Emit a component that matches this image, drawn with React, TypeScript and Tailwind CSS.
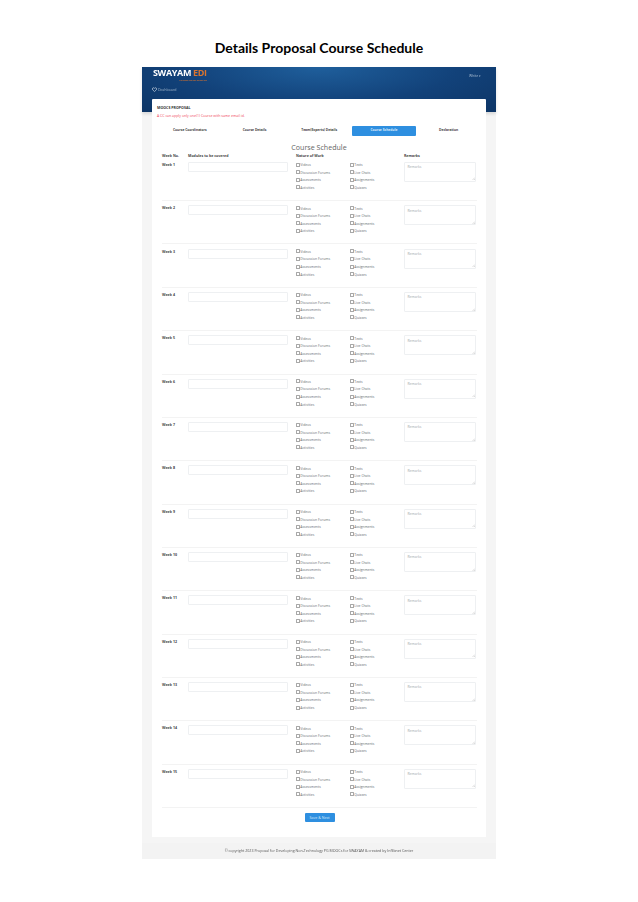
const tabs = ["Course Coordinators", "Course Details", "Team(Experts) Details", "Course Schedule", "Declaration"];
const weeks = Array.from({ length: 15 }, (_, i) => i + 1);
const workLeft = ["Videos", "Discussion Forums", "Assessments", "Activities"];
const workRight = ["Texts", "Live Chats", "Assignments", "Quizzes"];

function WorkList({ items }: { items: string[] }) {
  return (
    <div className="-mt-[1px] flex flex-col">
      {items.map((item) => (
        <div key={item} className="flex h-[7.55px] items-center gap-[0.3px] text-[3.4px] text-[#666c73]">
          <span className="h-[4px] w-[4px] rounded-[0.5px] border border-[#a8a8a8]" />
          {item}
        </div>
      ))}
    </div>
  );
}

function WeekRow({ week }: { week: number }) {
  return (
    <div className="grid h-[43.35px] grid-cols-[26px_108px_54px_54px_72px] border-b border-[#f3f3f3] pt-[4.2px]">
      <p className="text-[3.6px] font-bold leading-[5px] text-[#444]">Week {week}</p>
      <div className="h-[10px] w-[100px] rounded-[1px] border border-[#eef0f2] bg-white" />
      <WorkList items={workLeft} />
      <WorkList items={workRight} />
      <div className="relative h-[20px] w-[72px] rounded-[1px] border border-[#eef0f2] bg-white pl-[2.5px] pt-[1.2px] text-[3.4px] leading-[5px] text-[#a0a6ac]">
        Remarks
        <svg className="absolute bottom-[0.5px] right-[0.5px]" width="3" height="3" viewBox="0 0 6 6" stroke="#aaaaaa" strokeWidth="0.8">
          <path d="M1 6 L6 1 M4 6 L6 4" />
        </svg>
      </div>
    </div>
  );
}

export default function App() {
  return (
    <div className="h-[902px] w-[638px] overflow-hidden bg-white font-['Open_Sans',sans-serif]">
      <h1 className="pt-[38px] text-center font-['Lato',sans-serif] text-[14px] font-bold leading-[20px] text-black">
        Details Proposal Course Schedule
      </h1>
      <div className="mx-[142px] mt-[9px] w-[354px] bg-[#f5f5f5] blur-[0.3px]">
        <header className="h-[45px] bg-[radial-gradient(ellipse_at_50%_0%,#1f5f9c_0%,#12427a_55%,#0d3566_100%)] pl-[10px] pr-[14px] pt-[1px] shadow-[0_2px_3px_rgba(0,0,0,0.12)]">
          <div className="flex items-start justify-between">
            <div className="ml-[1px] w-[54px]">
              <p className="whitespace-nowrap text-[9px] font-bold leading-[10px] tracking-[-0.35px] text-white">
                SWAYAM <span className="text-[#d9742f]">EDI</span>
              </p>
              <p className="whitespace-nowrap pt-[1.2px] text-right text-[2.4px] font-bold leading-[3px] text-[#c96d30]">COURSE DEVELOPMENT</p>
            </div>
            <p className="pr-[1px] pt-[5px] text-[3.4px] text-[#a9bdd2]">White ▾</p>
          </div>
          <p className="mt-[4.8px] flex items-center gap-[1px] text-[3.6px] text-[#9fb4c9]">
            <svg width="5" height="5" viewBox="0 0 24 24" fill="none" stroke="#dfe8f0" strokeWidth="3">
              <path d="M20.8 5.6a5.5 5.5 0 0 0-7.8 0L12 6.7l-1-1.1a5.5 5.5 0 0 0-7.8 7.8L12 22l8.8-8.6a5.5 5.5 0 0 0 0-7.8z" />
            </svg>
            Dashboard
          </p>
        </header>
        <div className="relative mx-[10px] -mt-[13px] h-[738px] rounded-t-[1px] bg-white px-[5px] pt-[6px]">
          <p className="text-[3.6px] font-bold leading-[5px] text-[#333]">MOOCS PROPOSAL</p>
          <p className="mt-[3px] text-[3.5px] leading-[5px] text-[#f0485a]">
            A CC can apply only one(1) Course with same email id.
          </p>
          <nav className="mt-[8px] grid h-[9.5px] grid-cols-5 pl-[0.5px]">
            {tabs.map((tab) => (
              <div
                key={tab}
                className={
                  tab === "Course Schedule"
                    ? "flex items-center justify-center rounded-[1px] bg-[#2e8fe0] text-[3.3px] font-bold text-[#d7e9f9]"
                    : "flex items-center justify-center text-[3.3px] font-bold text-[#444]"
                }
              >
                {tab}
              </div>
            ))}
          </nav>
          <h2 className="mt-[6px] text-center text-[7.1px] leading-[10px] text-[#666]">Course Schedule</h2>
          <div className="ml-[5px] mt-[1.5px] w-[315px]">
            <div className="grid h-[4.8px] grid-cols-[26px_108px_108px_72px] items-center text-[3.6px] font-bold text-[#444]">
              <p>Week No.</p>
              <p>Modules to be covered</p>
              <p>Nature of Work</p>
              <p>Remarks</p>
            </div>
            {weeks.map((week) => (
              <WeekRow key={week} week={week} />
            ))}
            <div className="flex justify-center pt-[5px]">
              <div className="flex h-[9.5px] w-[30px] items-center justify-center rounded-[1px] bg-[#2e8fe0] text-[3.6px] text-[#d7e9f9]">
                Save & Next
              </div>
            </div>
          </div>
        </div>
        <footer className="mt-[6px] flex h-[16px] items-center justify-center bg-[#f3f3f3] text-[3.6px] text-[#555]">
          © copyright 2023 Proposal for Developing Non-Technology PG MOOCs for SWAYAM & created by Inflibnet Center
        </footer>
      </div>
    </div>
  );
}
